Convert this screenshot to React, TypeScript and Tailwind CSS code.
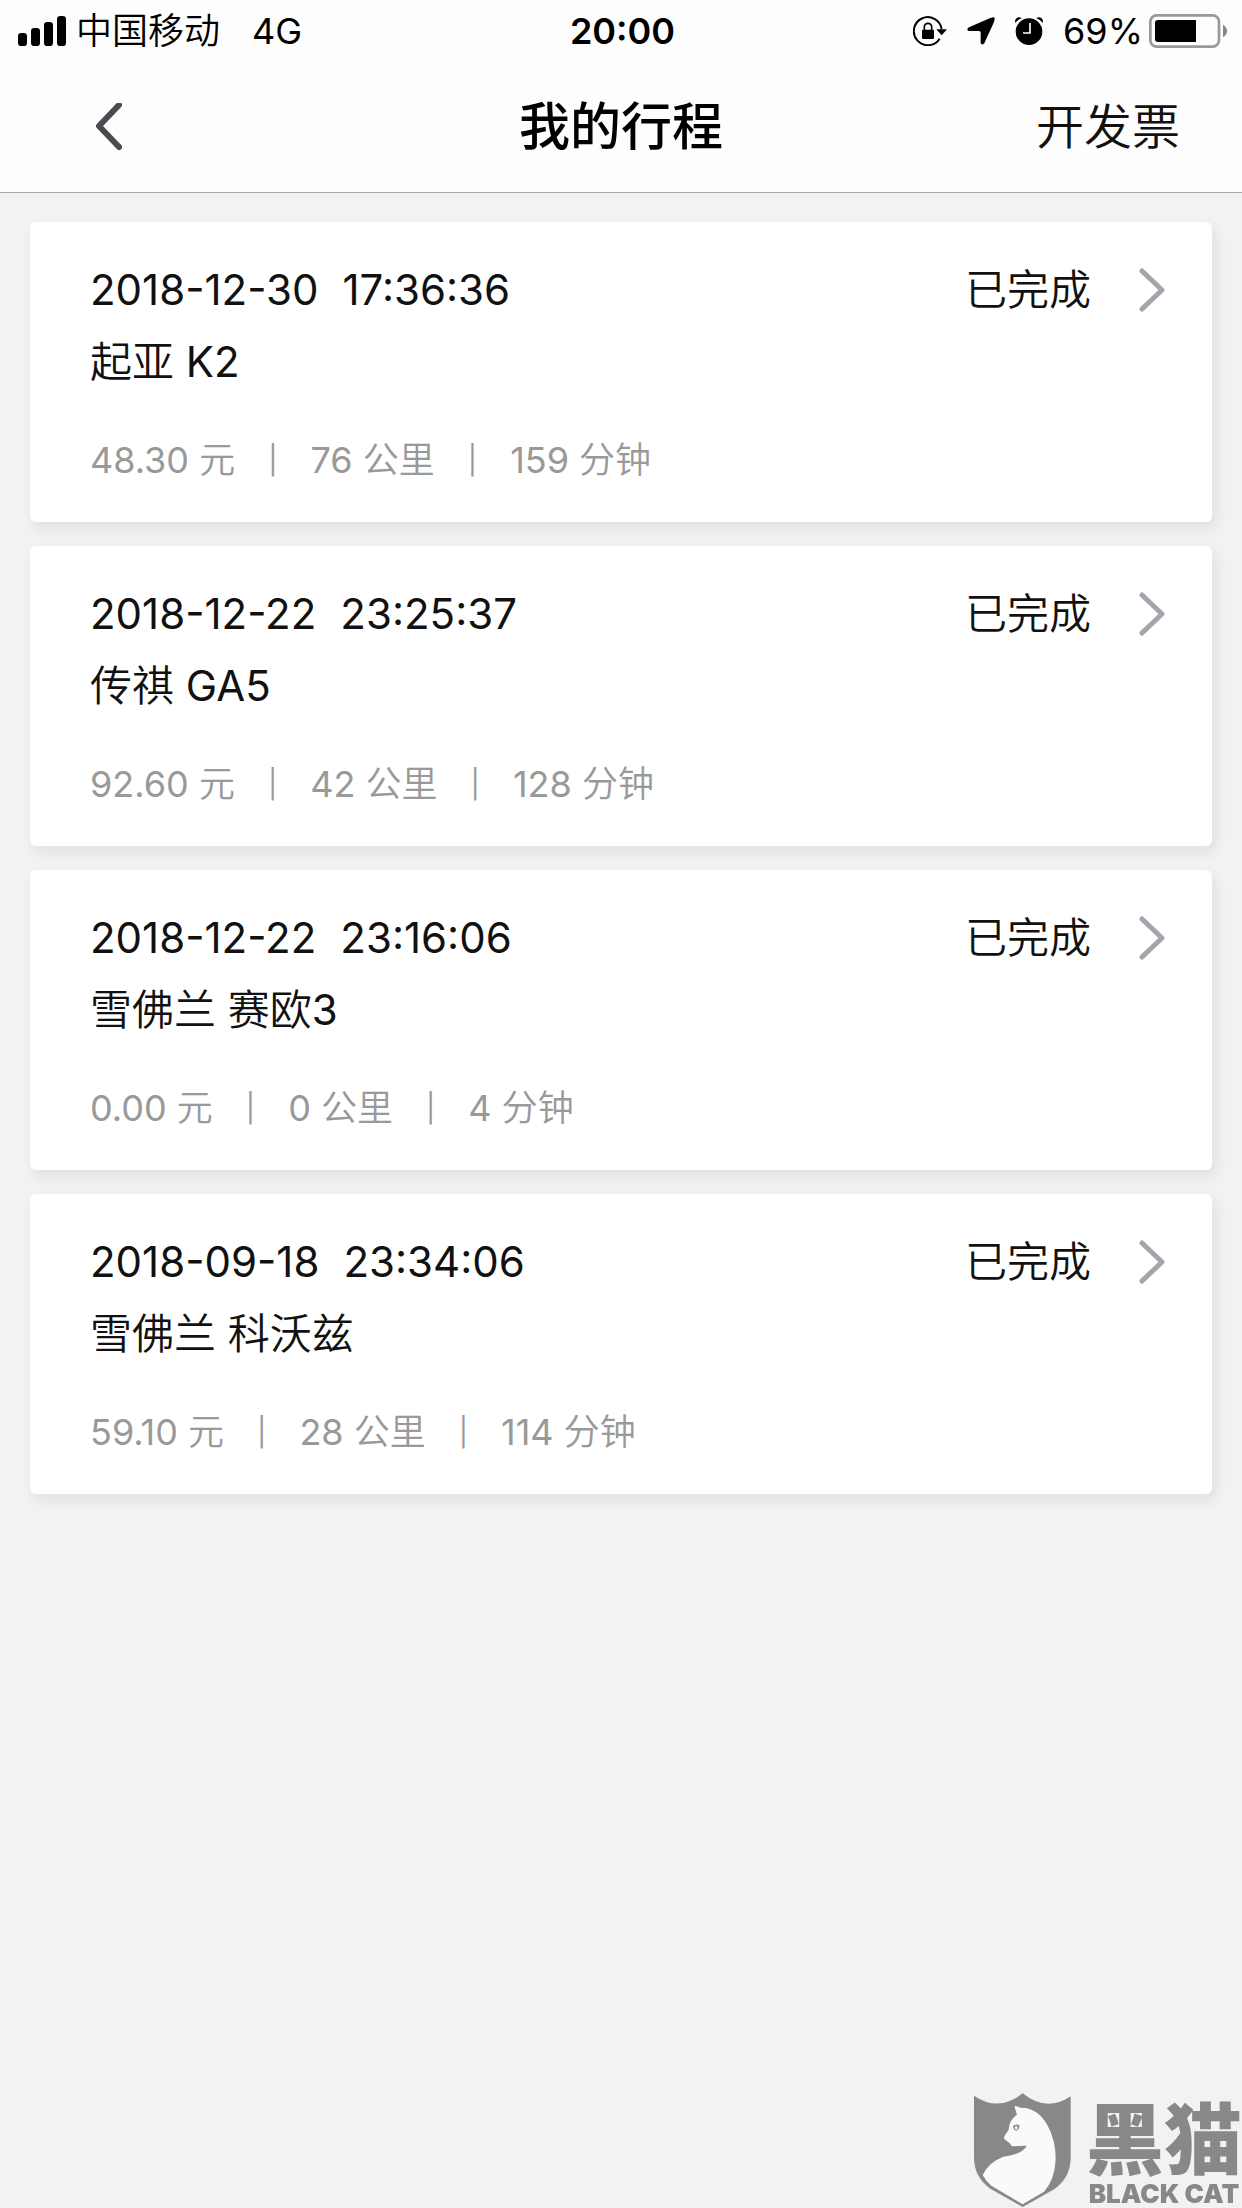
import React from 'react';

const trips = [
  { date: '2018-12-30', time: '17:36:36', car: '起亚 K2', price: '48.30', distance: '76', minutes: '159' },
  { date: '2018-12-22', time: '23:25:37', car: '传祺 GA5', price: '92.60', distance: '42', minutes: '128' },
  { date: '2018-12-22', time: '23:16:06', car: '雪佛兰 赛欧3', price: '0.00', distance: '0', minutes: '4' },
  { date: '2018-09-18', time: '23:34:06', car: '雪佛兰 科沃兹', price: '59.10', distance: '28', minutes: '114' },
];

function SignalIcon() {
  return (
    <svg className="w-12 h-[30px]" viewBox="54 45 144 90" aria-hidden="true">
      <rect x="54" y="96" width="27" height="39" rx="10" />
      <rect x="93" y="81" width="27" height="54" rx="10" />
      <rect x="132" y="63" width="27" height="72" rx="10" />
      <rect x="171" y="45" width="27" height="90" rx="10" />
    </svg>
  );
}

function RotationLockIcon() {
  return (
    <svg className="w-[34px] h-[30px]" viewBox="102 45 102 90" aria-hidden="true">
      <path d="M188 84A42 42 0 1 0 182 113" fill="none" stroke="#000" strokeWidth="6" />
      <path d="M172 85h32l-16 18z" />
      <rect x="129" y="86" width="36" height="28" rx="3" />
      <path d="M136 88V78a11 11 0 0 1 22 0v10" fill="none" stroke="#000" strokeWidth="5" />
    </svg>
  );
}

function LocationIcon() {
  return (
    <svg className="w-7 h-7" viewBox="262 50 84 84" aria-hidden="true">
      <path d="M340 51Q346 50 345 57Q344 62 342 67L314 129Q311 133 306 132Q303 131 303 127V97Q303 92 298 92H267Q263 91 263 87Q263 84 268 81L330 54Q335 52 340 51Z" />
    </svg>
  );
}

function AlarmIcon() {
  return (
    <svg className="w-7 h-7" viewBox="408 48 84 84" aria-hidden="true">
      <circle cx="450" cy="92" r="40" />
      <path d="M409 66Q406 55 414 50Q421 46 428 52Q416 56 409 66ZM491 66Q494 55 486 50Q479 46 472 52Q484 56 491 66Z" />
      <path d="M453 66V96H432" fill="none" stroke="#fff" strokeWidth="5" />
    </svg>
  );
}

function BatteryIcon() {
  return (
    <svg className="w-[78px] h-[34px]" viewBox="807 39 234 102" aria-hidden="true">
      <rect x="811" y="43" width="206" height="94" rx="19" fill="none" stroke="#999" strokeWidth="8" />
      <path d="M834 57H948V123H834Q825 123 825 114V66Q825 57 834 57Z" />
      <path d="M1029 71Q1041 78 1041 90Q1041 102 1029 109Z" fill="#888" />
    </svg>
  );
}

function StatusBar() {
  return (
    <div className="grid grid-cols-[1fr_auto_1fr] items-center h-[62px] pl-[18px] pr-[15px] text-[36px] leading-[62px]">
      <div className="flex items-center">
        <SignalIcon />
        <span className="ml-[10px]">中国移动</span>
        <span className="ml-8">4G</span>
      </div>
      <span className="font-semibold">20:00</span>
      <div className="flex items-center justify-end">
        <RotationLockIcon />
        <span className="ml-5"><LocationIcon /></span>
        <span className="ml-5"><AlarmIcon /></span>
        <span className="ml-5">69%</span>
        <span className="ml-1.5"><BatteryIcon /></span>
      </div>
    </div>
  );
}

function NavBar() {
  return (
    <nav className="grid grid-cols-[1fr_auto_1fr] items-center h-[130px] px-[62px]">
      <button type="button" aria-label="返回" className="justify-self-start px-8">
        <svg className="w-7 h-12" viewBox="0 0 28 48" fill="none" stroke="#4a4b50" strokeWidth="6" strokeLinecap="round" strokeLinejoin="round">
          <path d="M25 2L5 23l20 21" />
        </svg>
      </button>
      <h1 className="text-[51px] font-medium font-[Inter,'Noto_Sans_CJK_SC',sans-serif]">我的行程</h1>
      <button type="button" className="justify-self-end text-[48px] text-[#111]">开发票</button>
    </nav>
  );
}

function TripCard({ trip }: { trip: (typeof trips)[number] }) {
  return (
    <a href="#" className="block rounded-md bg-white pl-[60px] pr-[47px] py-8 shadow-[4px_6px_14px_rgba(0,0,0,0.08)]">
      <div className="flex items-center text-[42px] leading-[72px] text-[#111]">
        <span className="flex flex-1 gap-6">
          <span>{trip.date}</span>
          <span>{trip.time}</span>
        </span>
        <span>已完成</span>
        <svg className="ml-12 w-[26px] h-11" viewBox="0 0 26 44" fill="none" stroke="#a3a4ac" strokeWidth="5" strokeLinecap="round" strokeLinejoin="round">
          <path d="M3 3l20 19L3 41" />
        </svg>
      </div>
      <p className="text-[42px] leading-[72px] text-[#111]">{trip.car}</p>
      <div className="mt-8 flex gap-[33px] text-[36px] leading-[60px] text-[#999]">
        <span>{trip.price} 元</span>
        <span className="text-[28px]">|</span>
        <span>{trip.distance} 公里</span>
        <span className="text-[28px]">|</span>
        <span>{trip.minutes} 分钟</span>
      </div>
    </a>
  );
}

function BlackCatLogo() {
  return (
    <div className="fixed bottom-0 right-0 flex items-end gap-[14px] text-[#8a8788] pointer-events-none font-[Inter,'Noto_Sans_CJK_SC',sans-serif]">
      <svg className="w-[99px] h-[116px]" viewBox="67 66 297 348" aria-hidden="true">
        <path d="M70 77Q145 128 216 70Q287 128 360 79V262Q360 322 313 356L216 411L119 356Q70 322 70 262Z" fill="currentColor" />
        <path d="M199 134L191 109Q202 107 209 113Q260 112 290 165Q316 212 315 270Q312 330 280 365L216 403L122 347Q105 333 96 315Q113 277 158 260Q216 252 228 227L184 229Q177 218 162 208Q157 203 165 193L174 179Q176 148 199 134Z" fill="#fafafa" />
        <path d="M187 168Q195 161 206 165Q207 178 197 182Q188 181 187 168Z" fill="currentColor" />
        <path d="M196 166L201 173L197 180L192 174Z" fill="#fafafa" />
      </svg>
      <div className="flex flex-col items-center">
        <span className="text-[78px] leading-[78px] font-black">黑猫</span>
        <span className="text-[26px] leading-7 font-black">BLACK CAT</span>
      </div>
    </div>
  );
}

export default function App() {
  return (
    <div className="min-h-screen bg-[#f2f2f2] text-black font-[Inter,'Noto_Sans_CJK_SC_DemiLight','Noto_Sans_CJK_SC_Light','Noto_Sans_CJK_SC',sans-serif]">
      <header className="border-b border-[#a8a8a8] bg-[#fdfdfd]">
        <StatusBar />
        <NavBar />
      </header>
      <main className="px-[30px] pt-[29px] pb-8">
        <ul className="flex flex-col gap-6">
          {trips.map((trip) => (
            <li key={trip.date + trip.time}>
              <TripCard trip={trip} />
            </li>
          ))}
        </ul>
      </main>
      <BlackCatLogo />
    </div>
  );
}
